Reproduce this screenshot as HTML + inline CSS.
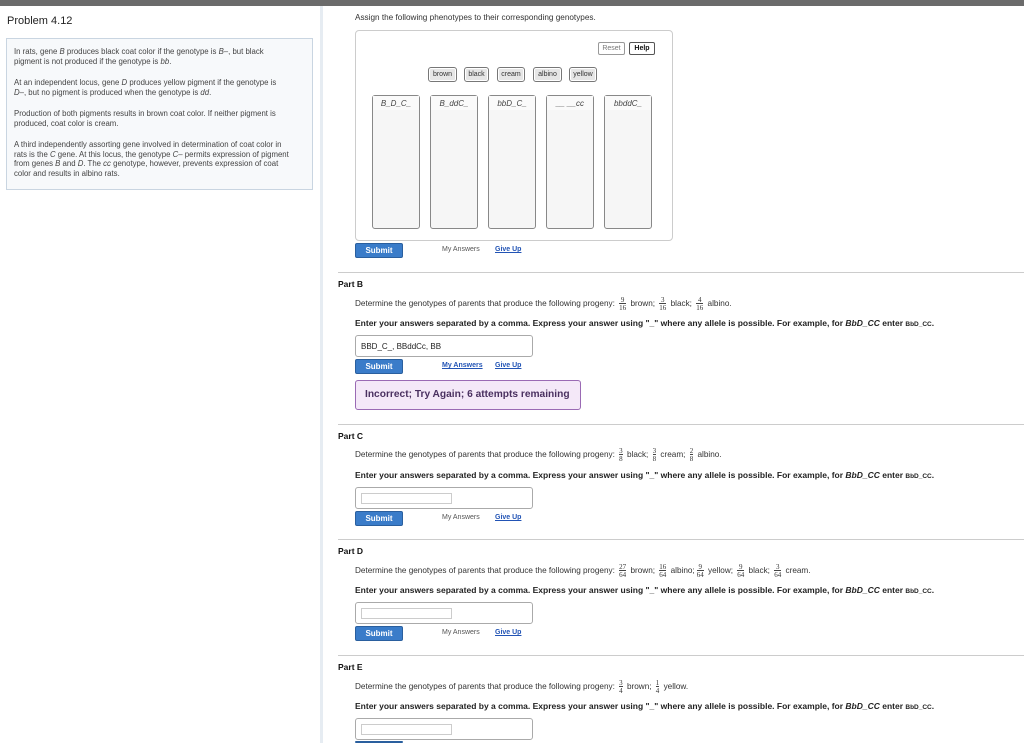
<!DOCTYPE html>
<html><head><meta charset="utf-8"><style>
*{margin:0;padding:0;box-sizing:border-box}
body{width:1024px;height:743px;overflow:hidden;background:#fff;font-family:"Liberation Sans",Arial,sans-serif;color:#333;position:relative}
.a{position:absolute;white-space:nowrap}
.topbar{left:0;top:0;width:1024px;height:6px;background:#6b6b6b}
.lp{left:320px;top:6px;width:3px;height:737px;background:#e6ecf2}
.prob{left:7px;top:15px;font-size:11px;color:#222}
.lbox{left:6px;top:38px;width:307px;height:152px;border:1px solid #c9d5e1;background:#f7f9fb;padding:8px 22px 8px 7px;font-size:7.8px;line-height:9.5px;color:#444;white-space:normal}
.lbox p{margin-bottom:12px}
.t8{font-size:8.2px;color:#333}
.b8{font-size:8.5px;font-weight:bold;color:#222}
.part{font-size:8.5px;font-weight:bold;color:#111}
.sep{left:338px;width:686px;height:1px;background:#ccc}
.btn{width:48px;height:15px;background:#3a7cc9;border:1px solid #2a5f9e;border-radius:2px;color:#fff;font-size:8px;font-weight:bold;text-align:center;line-height:13px}
.ma{font-size:7px;color:#555}
.gu{font-size:7px;color:#2254b5;font-weight:bold;text-decoration:underline}
.inp{width:178px;height:22px;border:1px solid #aaa;border-radius:3px;background:#fff}
.inp div{position:absolute;left:5px;top:5px;width:91px;height:11px;border:1px solid #ccc}
.fr{display:inline-block;vertical-align:middle;text-align:center;font-family:"Liberation Serif",serif;font-size:7px;line-height:6px;margin:0 2px}
.fr span{display:block;border-top:1px solid #444;padding-top:1px}
.chip{top:67px;height:15px;border:1px solid #777;border-radius:3px;background:#e6e6e6;font-size:7px;text-align:center;line-height:13px;color:#333;box-shadow:inset 0 0 0 1px #fff}
.col{top:95px;width:48px;height:134px;border:1px solid #888;border-radius:3px;background:#f6f6f6;font-size:8px;font-style:italic;text-align:center;color:#444;padding-top:3px}
.col::before{content:"";position:absolute;left:0;right:0;top:0;height:14px;background:#fafafa}
.col span{position:relative}
</style></head><body>
<div class="a topbar"></div>
<div class="a lp"></div>
<div class="a prob">Problem 4.12</div>
<div class="a lbox">
<p>In rats, gene <i>B</i> produces black coat color if the genotype is <i>B</i>–, but black pigment is not produced if the genotype is <i>bb</i>.</p>
<p>At an independent locus, gene <i>D</i> produces yellow pigment if the genotype is <i>D</i>–, but no pigment is produced when the genotype is <i>dd</i>.</p>
<p>Production of both pigments results in brown coat color. If neither pigment is produced, coat color is cream.</p>
<p>A third independently assorting gene involved in determination of coat color in rats is the <i>C</i> gene. At this locus, the genotype <i>C</i>– permits expression of pigment from genes <i>B</i> and <i>D</i>. The <i>cc</i> genotype, however, prevents expression of coat color and results in albino rats.</p>
</div>

<div class="a t8" style="left:355px;top:13px">Assign the following phenotypes to their corresponding genotypes.</div>
<div class="a" style="left:355px;top:30px;width:318px;height:211px;border:1px solid #ccc;border-radius:4px"></div>
<div class="a" style="left:598px;top:42px;width:27px;height:13px;border:1px solid #999;border-radius:2px;font-size:7px;color:#777;text-align:center;line-height:11px">Reset</div>
<div class="a" style="left:629px;top:42px;width:26px;height:13px;border:1px solid #555;border-radius:2px;font-size:7px;font-weight:bold;color:#111;text-align:center;line-height:11px">Help</div>
<div class="a chip" style="left:428px;width:29px">brown</div>
<div class="a chip" style="left:464px;width:25px">black</div>
<div class="a chip" style="left:497px;width:28px">cream</div>
<div class="a chip" style="left:533px;width:29px">albino</div>
<div class="a chip" style="left:569px;width:28px">yellow</div>
<div class="a col" style="left:372px"><span>B_D_C_</span></div>
<div class="a col" style="left:430px"><span>B_ddC_</span></div>
<div class="a col" style="left:488px"><span>bbD_C_</span></div>
<div class="a col" style="left:546px"><span>__ __cc</span></div>
<div class="a col" style="left:604px"><span>bbddC_</span></div>
<div class="a btn" style="left:355px;top:243px">Submit</div>
<div class="a ma" style="left:442px;top:246px">My Answers</div>
<div class="a gu" style="left:495px;top:246px">Give Up</div>

<div class="a sep" style="top:272px"></div>
<div class="a part" style="left:338px;top:279px">Part B</div>
<div class="a t8" style="left:355px;top:297px">Determine the genotypes of parents that produce the following progeny: <span class="fr">9<span>16</span></span> brown; <span class="fr">3<span>16</span></span> black; <span class="fr">4<span>16</span></span> albino.</div>
<div class="a b8" style="left:355px;top:318px">Enter your answers separated by a comma. Express your answer using "_" where any allele is possible. For example, for <i>BbD_CC</i> enter <span style="font-size:6.5px">BbD_CC</span>.</div>
<div class="a inp" style="left:355px;top:335px"><div style="border:none;font-size:8px;color:#222;line-height:10px;top:6px">BBD_C_, BBddCc, BB</div></div>
<div class="a btn" style="left:355px;top:359px">Submit</div>
<div class="a gu" style="left:442px;top:362px">My Answers</div>
<div class="a gu" style="left:495px;top:362px">Give Up</div>
<div class="a" style="left:355px;top:380px;width:226px;height:30px;background:#f4e8f8;border:1px solid #9a6ab4;border-radius:3px;font-size:10.2px;font-weight:bold;color:#4a3060;line-height:28px;padding-left:9px">Incorrect; Try Again; 6 attempts remaining</div>

<div class="a sep" style="top:424px"></div>
<div class="a part" style="left:338px;top:431px">Part C</div>
<div class="a t8" style="left:355px;top:448px">Determine the genotypes of parents that produce the following progeny: <span class="fr">3<span>8</span></span> black; <span class="fr">3<span>8</span></span> cream; <span class="fr">2<span>8</span></span> albino.</div>
<div class="a b8" style="left:355px;top:470px">Enter your answers separated by a comma. Express your answer using "_" where any allele is possible. For example, for <i>BbD_CC</i> enter <span style="font-size:6.5px">BbD_CC</span>.</div>
<div class="a inp" style="left:355px;top:487px"><div></div></div>
<div class="a btn" style="left:355px;top:511px">Submit</div>
<div class="a ma" style="left:442px;top:514px">My Answers</div>
<div class="a gu" style="left:495px;top:514px">Give Up</div>

<div class="a sep" style="top:539px"></div>
<div class="a part" style="left:338px;top:546px">Part D</div>
<div class="a t8" style="left:355px;top:564px">Determine the genotypes of parents that produce the following progeny: <span class="fr">27<span>64</span></span> brown; <span class="fr">16<span>64</span></span> albino;<span class="fr">9<span>64</span></span> yellow; <span class="fr">9<span>64</span></span> black; <span class="fr">3<span>64</span></span> cream.</div>
<div class="a b8" style="left:355px;top:585px">Enter your answers separated by a comma. Express your answer using "_" where any allele is possible. For example, for <i>BbD_CC</i> enter <span style="font-size:6.5px">BbD_CC</span>.</div>
<div class="a inp" style="left:355px;top:602px"><div></div></div>
<div class="a btn" style="left:355px;top:626px">Submit</div>
<div class="a ma" style="left:442px;top:629px">My Answers</div>
<div class="a gu" style="left:495px;top:629px">Give Up</div>

<div class="a sep" style="top:655px"></div>
<div class="a part" style="left:338px;top:662px">Part E</div>
<div class="a t8" style="left:355px;top:680px">Determine the genotypes of parents that produce the following progeny: <span class="fr">3<span>4</span></span> brown; <span class="fr">1<span>4</span></span> yellow.</div>
<div class="a b8" style="left:355px;top:701px">Enter your answers separated by a comma. Express your answer using "_" where any allele is possible. For example, for <i>BbD_CC</i> enter <span style="font-size:6.5px">BbD_CC</span>.</div>
<div class="a inp" style="left:355px;top:718px"><div></div></div>
<div class="a btn" style="left:355px;top:741px;height:2px"></div>
</body></html>
